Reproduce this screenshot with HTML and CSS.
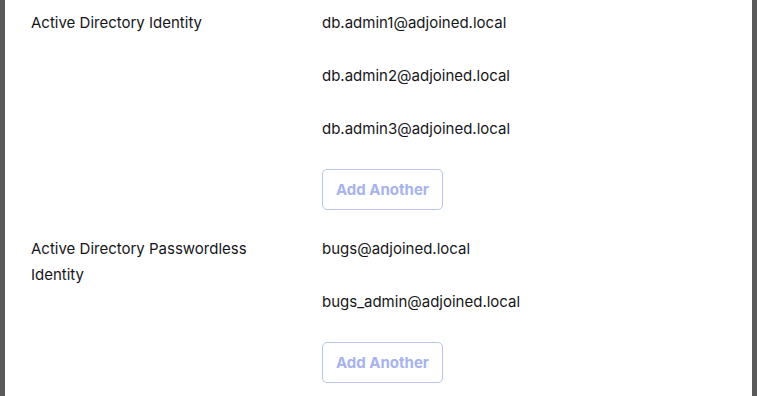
FILE: index.html
```html
<!DOCTYPE html>
<html>
<head>
<meta charset="utf-8">
<link rel="stylesheet" href="styles.css">
</head>
<body>
<div class="backdrop">
  <div class="modal">
    <div class="section">
      <div class="label">Active Directory Identity</div>
      <div class="values">
        <div class="list">
          <div class="value">db.admin1@adjoined.local</div>
          <div class="value">db.admin2@adjoined.local</div>
          <div class="value">db.admin3@adjoined.local</div>
        </div>
        <button class="add">Add Another</button>
      </div>
    </div>
    <div class="section">
      <div class="label">Active Directory Passwordless Identity</div>
      <div class="values">
        <div class="list">
          <div class="value">bugs@adjoined.local</div>
          <div class="value">bugs_admin@adjoined.local</div>
        </div>
        <button class="add">Add Another</button>
      </div>
    </div>
  </div>
</div>
</body>
</html>
```
FILE: styles.css
```css
html, body {
  margin: 0;
  padding: 0;
  height: 100%;
  overflow: hidden;
}
body {
  background: #5a5a5a;
  font-family: Inter, "Noto Sans", sans-serif;
  color: #16161a;
}
.backdrop {
  height: 100%;
  padding: 0 5px 0 5px;
  box-sizing: border-box;
}
.modal {
  background: #ffffff;
  height: 100%;
  padding: 10px 0 0 26px;
  box-sizing: border-box;
  display: flex;
  flex-direction: column;
  gap: 26px;
}
.section {
  display: grid;
  grid-template-columns: 291px 1fr;
}
.label {
  font-size: 15px;
  line-height: 26px;
  width: 230px;
}
.values {
  display: flex;
  flex-direction: column;
  align-items: flex-start;
}
.list {
  display: flex;
  flex-direction: column;
  gap: 27px;
}
.value {
  font-size: 15px;
  line-height: 26px;
}
.add {
  margin-top: 27px;
  width: 121px;
  height: 41px;
  border: 1px solid #b7c3f3;
  border-radius: 5px;
  background: #ffffff;
  color: #a6b3ee;
  font-family: Inter, "Noto Sans", sans-serif;
  font-weight: 700;
  font-size: 15px;
  padding: 0;
}
```
